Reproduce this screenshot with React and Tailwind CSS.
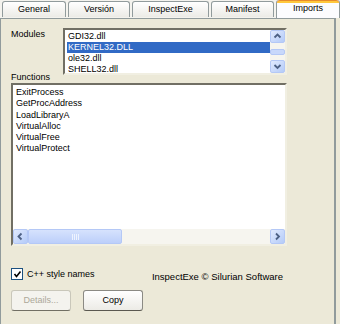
import React from "react";

const modules = ["GDI32.dll", "KERNEL32.DLL", "ole32.dll", "SHELL32.dll"];
const functions = [
  "ExitProcess",
  "GetProcAddress",
  "LoadLibraryA",
  "VirtualAlloc",
  "VirtualFree",
  "VirtualProtect",
];

const tabs = [
  { label: "General", w: "w-[64px]" },
  { label: "Versión", w: "w-[62px]" },
  { label: "InspectExe", w: "w-[77px]" },
  { label: "Manifest", w: "w-[63px]" },
];

function Arrow({ dir }) {
  const paths = {
    up: "M3.5 7.5 L6.5 4.5 L9.5 7.5",
    down: "M3.5 5 L6.5 8 L9.5 5",
    left: "M7.5 3.5 L4.5 6.5 L7.5 9.5",
    right: "M5 3.5 L8 6.5 L5 9.5",
  };
  return (
    <svg width="13" height="13" viewBox="0 0 13 13">
      <path d={paths[dir]} fill="none" stroke="#4d6185" strokeWidth="1.8" />
    </svg>
  );
}

function ScrollBtn({ dir, className = "" }) {
  return (
    <div
      className={`flex items-center justify-center rounded-[2px] border border-[#b4c8f6] bg-gradient-to-br from-[#e1eafe] to-[#b4cbf8] ${className}`}
    >
      <Arrow dir={dir} />
    </div>
  );
}

export default function App() {
  return (
    <div className="w-[340px] h-[324px] bg-[#ece9d8] text-[9px] leading-[11px] text-black font-['Liberation_Sans',Arial,sans-serif] overflow-hidden">
      {/* tab strip */}
      <div className="flex items-end h-[18px] pl-[2px] gap-[2px] bg-[#f4f3ee]">
        {tabs.map((t) => (
          <div
            key={t.label}
            className={`${t.w} h-[16px] mb-[1px] flex items-center justify-center border border-b-0 border-[#919b9c] rounded-t-[3px] bg-gradient-to-b from-white to-[#ecebe6]`}
          >
            {t.label}
          </div>
        ))}
        <div className="w-[64px] h-[18px] flex flex-col border-x border-[#919b9c] rounded-t-[3px] bg-[#fcfcfe]">
          <div className="h-[3px] bg-[#ffc83c] border-t border-[#e68b2c] rounded-t-[3px]" />
          <div className="flex-1 flex justify-center">Imports</div>
        </div>
      </div>

      {/* panel */}
      <div className="w-[336px] h-[306px] border-t border-x border-[#919b9c] border-r-2 pl-[10px] pt-[9px]">
        <div className="flex">
          <div className="w-[52px] pt-[1px]">Modules</div>
          <div className="w-[224px] h-[47px] flex border-2 border-t-[#716f64] border-l-[#716f64] border-b-[#f1efe2] border-r-[#f1efe2] bg-white">
            <div className="flex-1 pl-[2px] pt-[1px]">
              {modules.map((m, i) => (
                <div
                  key={m}
                  className={`h-[11px] pl-[1px] ${i === 1 ? "bg-[#316ac5] text-white" : ""}`}
                >
                  {m}
                </div>
              ))}
            </div>
            <div className="w-[15px] flex flex-col bg-[#f6f5ef]">
              <ScrollBtn dir="up" className="h-[13px]" />
              <div className="flex-1 flex items-center">
                <div className="w-full h-[6px] rounded-[2px] border border-[#b4c8f6] bg-[#c8d8fb]" />
              </div>
              <ScrollBtn dir="down" className="h-[13px]" />
            </div>
          </div>
        </div>

        <div className="mt-[-3px] h-[11px]">Functions</div>

        <div className="w-[276px] h-[163px] flex flex-col border-2 border-t-[#716f64] border-l-[#716f64] border-b-[#f1efe2] border-r-[#f1efe2] bg-white">
          <div className="flex-1 pl-[3px] pt-[2px]">
            {functions.map((f) => (
              <div key={f} className="h-[11.3px]">
                {f}
              </div>
            ))}
          </div>
          <div className="h-[15px] flex bg-[#f6f5ef]">
            <ScrollBtn dir="left" className="w-[15px]" />
            <div className="w-[94px] flex items-center justify-center rounded-[2px] border border-[#b4c8f6] bg-gradient-to-b from-[#d6e2fd] to-[#bccffa]">
              <div className="flex gap-[1px]">
                <div className="w-[1px] h-[6px] bg-[#eef3fe]" />
                <div className="w-[1px] h-[6px] bg-[#eef3fe]" />
                <div className="w-[1px] h-[6px] bg-[#eef3fe]" />
                <div className="w-[1px] h-[6px] bg-[#eef3fe]" />
              </div>
            </div>
            <div className="flex-1" />
            <ScrollBtn dir="right" className="w-[15px]" />
          </div>
        </div>

        <div className="mt-[22px] w-[272px] flex items-end justify-between">
          <div className="flex items-center gap-[4px]">
            <div className="w-[12px] h-[12px] border border-[#1c5180] bg-white flex items-center justify-center">
              <svg width="9" height="9" viewBox="0 0 9 9">
                <path d="M1.5 4 L3.5 6.5 L7.5 1.5" fill="none" stroke="#000" strokeWidth="1.6" />
              </svg>
            </div>
            <span>C++ style names</span>
          </div>
          <span className="mb-[-2px] text-[9.5px]">InspectExe © Silurian Software</span>
        </div>

        <div className="mt-[10px] flex gap-[12px]">
          <div className="w-[60px] h-[21px] flex items-center justify-center rounded-[3px] border border-[#c9c7ba] border-b-[#716f64] bg-[#f4f3ee] text-[#aca899]">
            Details...
          </div>
          <div className="w-[60px] h-[21px] flex items-center justify-center rounded-[3px] border border-[#8b8a84] border-b-[#5a5850] bg-gradient-to-b from-white to-[#ecebe6]">
            Copy
          </div>
        </div>
      </div>
    </div>
  );
}
